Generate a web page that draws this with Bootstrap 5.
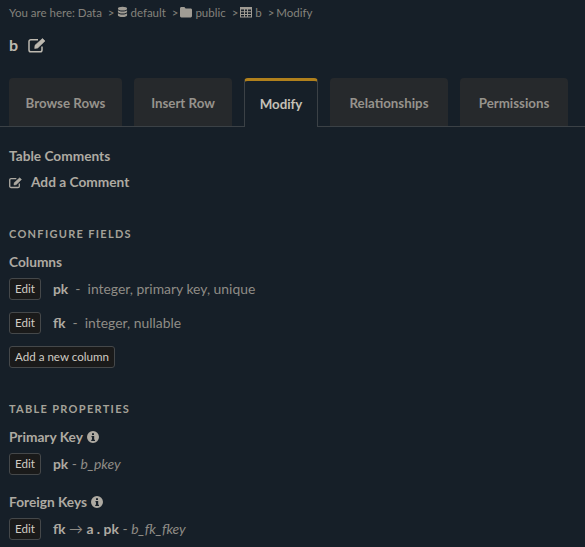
<!DOCTYPE html>
<html lang="en"><head><meta charset="utf-8"><title>Modify</title>
<link href="https://cdn.jsdelivr.net/npm/bootstrap@5.3.0/dist/css/bootstrap.min.css" rel="stylesheet">
<style>
html,body{height:547px;overflow:hidden}
body{background:#161f28;color:#b0aca4;font-family:"Lato",sans-serif;font-size:14px;line-height:20px}
.crumbs{font-size:11.5px;color:#84827c;height:16px;line-height:16px;padding:5px 0 0 9px;box-sizing:content-box;white-space:nowrap}
.crumbs svg{fill:#a09c94;vertical-align:-1px}
.crumbs .sep{margin:0 2px 0 3px}
.tname{padding-left:9px;margin-top:12px;height:24px;font-size:16px;font-weight:700;color:#bdb9b0;gap:10px}
.tname svg{stroke:#bdb9b0}
.tabbar{margin-top:21px;height:49px;border-bottom:1px solid #3b4146;padding-left:9px;gap:12px}
.tabx{height:48px;background:#26292c;border-radius:4px 4px 0 0;font-size:13.3px;font-weight:700;color:#96938c;display:flex;align-items:center;justify-content:center;text-decoration:none;padding-top:2px}
.tabx.on{background:#161f28;color:#c4c0b7;border:1px solid #3b4146;border-top:3px solid #b0801c;border-bottom:0;height:49px;padding-top:0;padding-bottom:1px}
.pane{padding-left:9px}
.lab{font-size:13.7px;font-weight:700;color:#aeaaa2;line-height:20px}
.caps{font-size:11px;font-weight:700;letter-spacing:1.3px;color:#a5a299;line-height:16px}
.btx{background:#1a1a1a;border:1px solid #45484a;color:#d0ccc4;font-size:11.6px;line-height:16px;padding:2px 5px;border-radius:3px;height:22px}
.btx:hover{background:#1a1a1a;color:#d0ccc4}
.rowx{gap:12px;color:#8f8c86;font-size:13.9px;height:22px}
.rowx b{color:#aeaaa2;font-weight:700}
.infoi{fill:#aeaaa2;vertical-align:-1px;margin-left:1px}
.t1{margin-top:19px}.t2{margin-top:6px}.t3{margin-top:34px}.t4{margin-top:10px}.t5{margin-top:6px}.t6{margin-top:12px}.t7{margin-top:12px}.t8{margin-top:33px}.t9{margin-top:10px}.t10{margin-top:6px}.t11{margin-top:17px}
</style></head><body>
<div class="crumbs">You are here: Data <span class="sep">&gt;</span><svg width="11" height="12" viewBox="0 0 12 12"><ellipse cx="6" cy="2.4" rx="5" ry="2"/><path d="M1 4v1.600c0 1.100 2.200 2 5 2s5-.9 5-2V4c-1 1-3 1.500-5 1.500S2 5 1 4zM1 7.300v2.200c0 1.100 2.200 2 5 2s5-.9 5-2V7.300c-1 1-3 1.500-5 1.500s-4-.5-5-1.500z"/></svg> default <span class="sep">&gt;</span><svg width="12" height="12" viewBox="0 0 12 12"><path d="M0 2.500C0 1.700.6 1 1.400 1h3l1.200 1.400h5C11.400 2.400 12 3 12 3.800v6.300c0 .7-.6 1.300-1.400 1.300H1.400C.6 11.400 0 10.800 0 10.100z"/></svg> public <span class="sep">&gt;</span><svg width="12" height="12" viewBox="0 0 12 12"><path fill-rule="evenodd" d="M0 1h12v10.500H0zM1 3.500V5.300h3V3.500zM5 3.500V5.300h2V3.500zM8 3.500V5.300h3V3.500zM1 6.300V8h3V6.300zM5 6.300V8h2V6.300zM8 6.300V8h3V6.300zM1 9v1.500h3V9zM5 9v1.500h2V9zM8 9v1.500h3V9z"/></svg> b <span class="sep">&gt;</span>Modify</div>
<div class="tname d-flex align-items-center"><span>b</span><svg width="19" height="16" viewBox="0 0 19 16" fill="none" stroke-width="1.500"><path d="M14 9.500V13a1.800 1.800 0 0 1-1.800 1.800H2.800A1.800 1.800 0 0 1 1 13V4.500a1.800 1.800 0 0 1 1.800-1.800H10"/><path d="M7 8.300 14.500 1.500 17 4l-7.300 7-3 .5z" fill="#bdb9b0" stroke-width=".6"/></svg></div>
<div class="tabbar d-flex">
<a class="tabx" href="#" style="width:113px">Browse Rows</a>
<a class="tabx" href="#" style="width:98px">Insert Row</a>
<a class="tabx on" href="#" style="width:74px">Modify</a>
<a class="tabx" href="#" style="width:118px">Relationships</a>
<a class="tabx" href="#" style="width:108px">Permissions</a>
</div>
<div class="pane">
<div class="lab t1">Table Comments</div>
<div class="lab t2 d-flex align-items-center" style="gap:8px"><svg width="14" height="13" viewBox="0 0 19 16" fill="none" stroke="#aeaaa2" stroke-width="1.800"><path d="M14 9.500V13a1.800 1.800 0 0 1-1.800 1.800H2.800A1.800 1.800 0 0 1 1 13V4.500a1.800 1.800 0 0 1 1.800-1.800H10"/><path d="M7 8.300 14.500 1.500 17 4l-7.300 7-3 .5z" fill="#aeaaa2" stroke-width=".6"/></svg><span>Add a Comment</span></div>
<div class="caps t3">CONFIGURE FIELDS</div>
<div class="lab t4">Columns</div>
<div class="rowx t5 d-flex align-items-center"><button class="btn btx">Edit</button><span><b>pk</b>&nbsp; - &nbsp;integer, primary key, unique</span></div>
<div class="rowx t6 d-flex align-items-center"><button class="btn btx">Edit</button><span><b>fk</b>&nbsp; - &nbsp;integer, nullable</span></div>
<div class="t7 d-flex"><button class="btn btx">Add a new column</button></div>
<div class="caps t8">TABLE PROPERTIES</div>
<div class="lab t9">Primary Key <svg class="infoi" width="12" height="12" viewBox="0 0 12 12"><path fill-rule="evenodd" d="M6 0a6 6 0 1 0 0 12A6 6 0 0 0 6 0zM5 2.200h2v1.700H5zM4.500 5h2.700v3.800h.8V10H4.200V8.800H5V6.200h-.5z"/></svg></div>
<div class="rowx t10 d-flex align-items-center"><button class="btn btx">Edit</button><span><b>pk</b> - <i>b_pkey</i></span></div>
<div class="lab t11">Foreign Keys <svg class="infoi" width="12" height="12" viewBox="0 0 12 12"><path fill-rule="evenodd" d="M6 0a6 6 0 1 0 0 12A6 6 0 0 0 6 0zM5 2.200h2v1.700H5zM4.500 5h2.700v3.800h.8V10H4.200V8.800H5V6.200h-.5z"/></svg></div>
<div class="rowx t10 d-flex align-items-center"><button class="btn btx">Edit</button><span><b>fk</b> → <b>a . pk</b> - <i>b_fk_fkey</i></span></div>
</div>
<script src="https://cdn.jsdelivr.net/npm/bootstrap@5.3.0/dist/js/bootstrap.bundle.min.js"></script>
</body></html>
